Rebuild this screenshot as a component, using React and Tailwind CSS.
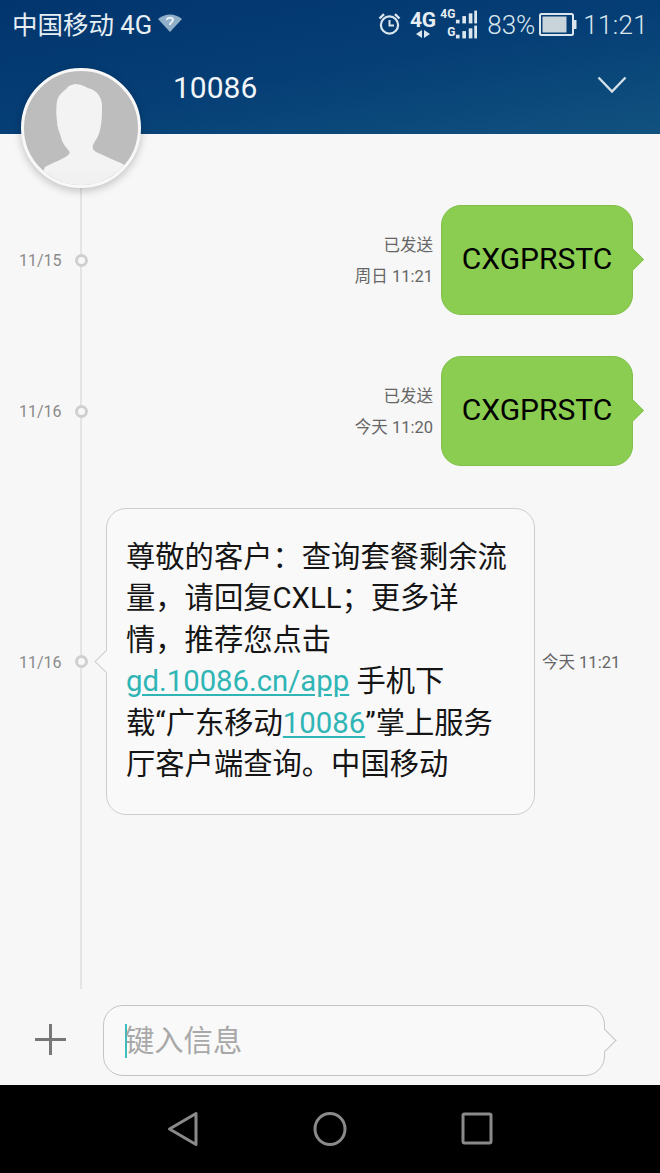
import React from "react";

const latin = "font-['Roboto','Noto_Sans_CJK_SC',sans-serif]";

function Alarm() {
  return (
    <svg width="23" height="24" viewBox="0 0 23 24" fill="none" stroke="#dbe6ee" strokeWidth="2.2">
      <circle cx="11.5" cy="13" r="8.6" />
      <path d="M11.5 8v5.5h4.5" strokeWidth="2" />
      <path d="M1.5 6.5 6 2.2M21.5 6.5 17 2.2" strokeWidth="2.4" />
    </svg>
  );
}

function Bars() {
  return (
    <svg width="24" height="14" viewBox="0 0 24 14" fill="#dbe6ee">
      <rect x="1" y="10" width="4" height="4" />
      <rect x="8" y="6" width="4" height="8" />
      <rect x="15" y="3" width="4" height="11" />
      <rect x="21" y="0" width="3" height="14" />
    </svg>
  );
}

function StatusBar() {
  return (
    <div className="flex h-[48px] items-center px-[12px] text-[#e6eef4]">
      <span className="pt-[1px] text-[25.5px] leading-[48px]">中国移动 4G</span>
      <svg className="ml-[6px] -mt-[3px]" width="24" height="18" viewBox="0 0 24 18" fill="#8fb0c8">
        <path d="M0 5 C7 -1 17 -1 24 5 L12 18 Z" />
        <path d="M9 6c0-3 6-3 6 0 0 2-3 2-3 5" fill="none" stroke="#e8f0f5" strokeWidth="2" />
      </svg>
      <div className="ml-auto flex items-center">
        <Alarm />
        <div className="ml-[8px] flex w-[27px] flex-col items-center">
          <span className="text-[21px] leading-[20px] font-bold tracking-[-0.5px]">4G</span>
          <svg width="14" height="8" viewBox="0 0 14 8" fill="#dbe6ee">
            <path d="M0 4 6 0v8zM8 0l6 4-6 4z" />
          </svg>
        </div>
        <div className="ml-[4px] flex w-[37px] flex-col">
          <div className="flex items-end">
            <span className="w-[15px] -mt-[2px] self-start text-[12px] leading-[13px] font-bold">4G</span>
            <Bars />
          </div>
          <div className="mt-[1px] flex items-end">
            <span className="w-[15px] pl-[7px] text-[12px] leading-[13px] font-bold">G</span>
            <Bars />
          </div>
        </div>
        <span className="ml-[10px] pt-[1px] text-[26px] leading-[48px] font-light text-[#dbe6ee]">83%</span>
        <svg className="ml-[4px]" width="38" height="23" viewBox="0 0 38 23" fill="none">
          <rect x="1" y="1" width="33" height="21" rx="1.5" stroke="#dbe6ee" strokeWidth="2" />
          <rect x="3.5" y="3.5" width="24" height="16" fill="#c9d3da" />
          <rect x="35" y="7" width="2.5" height="9" fill="#dbe6ee" />
        </svg>
        <span className="ml-[6px] pt-[1px] text-[26px] leading-[48px] font-light tracking-[0.3px] text-[#dbe6ee]">11:21</span>
      </div>
    </div>
  );
}

function Header() {
  return (
    <header className="h-[134px] shrink-0 bg-[linear-gradient(170deg,#02356d_0%,#053e75_50%,#11527f_100%)] text-white">
      <StatusBar />
      <div className="flex items-center pl-[173px] pr-[33px] pt-[19px]">
        <span className="text-[30px] leading-[42px] text-[#f2f6f9]">10086</span>
        <svg className="ml-auto -mt-[6px]" width="30" height="18" viewBox="0 0 30 18" fill="none" stroke="#d4e0ea" strokeWidth="2.4">
          <path d="M1.5 1.5 15 15.5 28.5 1.5" />
        </svg>
      </div>
    </header>
  );
}

function Avatar() {
  return (
    <div className="absolute left-[21px] top-[68px] z-20 h-[120px] w-[120px] overflow-hidden rounded-full border-[3px] border-[#f8f8f8] bg-[#bdbdbd] shadow-[0_3px_8px_rgba(0,0,0,0.22)]">
      <svg width="114" height="114" viewBox="0 0 114 114" fill="#f3f3f3">
        <path d="M51 13c6 0 10 3 16 5 7 3 11 9 11 17 0 8 0 16-2 24-1 6-5 11-7 15-1 3 0 5 3 7 10 5 22 9 32 15L101 114H13L21 96c7-4 16-7 22-11 3-2 3-4 2-5-3-4-7-8-8-14-2-6-4-10-4-16-1-7-1-13 0-20 2-7 6-9 10-13 2-3 5-3 8-4Z" />
        <rect x="0" y="100" width="114" height="14" fill="#efefef" opacity="0.5" />
      </svg>
    </div>
  );
}

function Dot() {
  return <span className="z-10 h-[13px] w-[13px] shrink-0 rounded-full border-[3px] border-[#cfcfcf] bg-[#f7f7f7]" />;
}

function DateLabel({ children }) {
  return <span className="w-[56px] shrink-0 pt-[2px] text-[16px] leading-[20px] text-[#8a8a8a]">{children}</span>;
}

function Sent({ date, when }) {
  return (
    <div className="flex items-center pl-[19px] pr-[27px]">
      <DateLabel>{date}</DateLabel>
      <Dot />
      <div className="ml-auto flex flex-col items-end gap-[11px] pt-[2px] text-[16.5px] leading-[20px] text-[#666666]">
        <span>已发送</span>
        <span>{when}</span>
      </div>
      <div className="relative ml-[8px] flex h-[110px] w-[192px] items-center justify-center rounded-[20px] border border-[#80c04a] bg-[#8bcd50]">
        <span className="absolute -right-[9px] top-[45px] h-[17px] w-[17px] rotate-45 rounded-[2px] border-r border-t border-[#80c04a] bg-[#8bcd50]" />
        <span className="relative -mt-[3px] text-[30px] leading-[40px] text-black">CXGPRSTC</span>
      </div>
    </div>
  );
}

function Received() {
  return (
    <div className="mt-[1px] flex items-center pl-[19px]">
      <DateLabel>11/16</DateLabel>
      <Dot />
      <div className="relative ml-[18px] h-[307px] w-[429px] rounded-[20px] border border-[#cdcdcd] bg-[#f9f9f9] pl-[19px] pt-[28px] text-[29.3px] leading-[41.4px] text-[#151515]">
        <span className="absolute -left-[9px] top-[144px] h-[17px] w-[17px] rotate-45 border-b border-l border-[#cdcdcd] bg-[#f9f9f9]" />
        <p className="relative">
          尊敬的客户：查询套餐剩余流<br />
          量，请回复CXLL；更多详<br />
          情，推荐您点击<br />
          <a className="text-[#2fb5b5] underline underline-offset-[3px]">gd.10086.cn/app</a> 手机下<br />
          载“广东移动<a className="text-[#2fb5b5] underline underline-offset-[3px]">10086</a>”掌上服务<br />
          厅客户端查询。中国移动
        </p>
      </div>
      <span className="ml-[7px] pt-[2px] text-[16.5px] leading-[20px] text-[#666666]">今天 11:21</span>
    </div>
  );
}

function Composer() {
  return (
    <div className="flex h-[97px] shrink-0 items-start bg-[#f7f7f7] pl-[35px] pt-[17px]">
      <div className="relative mt-[19px] h-[31px] w-[31px] shrink-0">
        <span className="absolute left-[14px] top-0 h-[31px] w-[3px] bg-[#777777]" />
        <span className="absolute left-0 top-[14px] h-[3px] w-[31px] bg-[#777777]" />
      </div>
      <div className="relative ml-[37px] flex h-[71px] w-[502px] items-center rounded-[20px] border border-[#c4c4c4] bg-[#f9f9f9] pl-[21px]">
        <span className="absolute -right-[9px] top-[26px] h-[17px] w-[17px] rotate-45 border-r border-t border-[#c4c4c4] bg-[#f9f9f9]" />
        <span className="h-[34px] w-[2px] bg-[#3fbdbd]" />
        <span className="-ml-[2px] text-[29.3px] leading-[40px] text-[#a8a8a8]">键入信息</span>
      </div>
    </div>
  );
}

function NavBar() {
  return (
    <nav className="flex h-[88px] shrink-0 items-start bg-black pl-[167px] pt-[26px]">
      <svg width="32" height="36" viewBox="0 0 32 36" fill="none" stroke="#8a8a8a" strokeWidth="3" strokeLinejoin="round">
        <path d="M29 2.5V33.5L2.5 18Z" />
      </svg>
      <svg className="ml-[114px]" width="34" height="36" viewBox="0 0 34 36" fill="none" stroke="#8a8a8a" strokeWidth="3">
        <ellipse cx="17" cy="18" rx="15" ry="15.5" />
      </svg>
      <svg className="ml-[114px] mt-[1px]" width="32" height="33" viewBox="0 0 32 33" fill="none" stroke="#8a8a8a" strokeWidth="3" strokeLinejoin="round">
        <rect x="2" y="2" width="28" height="29" rx="1.5" />
      </svg>
    </nav>
  );
}

export default function App() {
  return (
    <div className={`relative flex h-[1173px] w-[660px] flex-col overflow-hidden bg-[#f7f7f7] ${latin}`}>
      <Header />
      <Avatar />
      <main className="relative flex flex-1 flex-col gap-[41px] pt-[71px]">
        <span className="absolute bottom-[-1px] left-[80px] top-0 w-[2px] bg-[#e4e4e4]" />
        <Sent date="11/15" when="周日 11:21" />
        <Sent date="11/16" when="今天 11:20" />
        <Received />
      </main>
      <Composer />
      <NavBar />
    </div>
  );
}
